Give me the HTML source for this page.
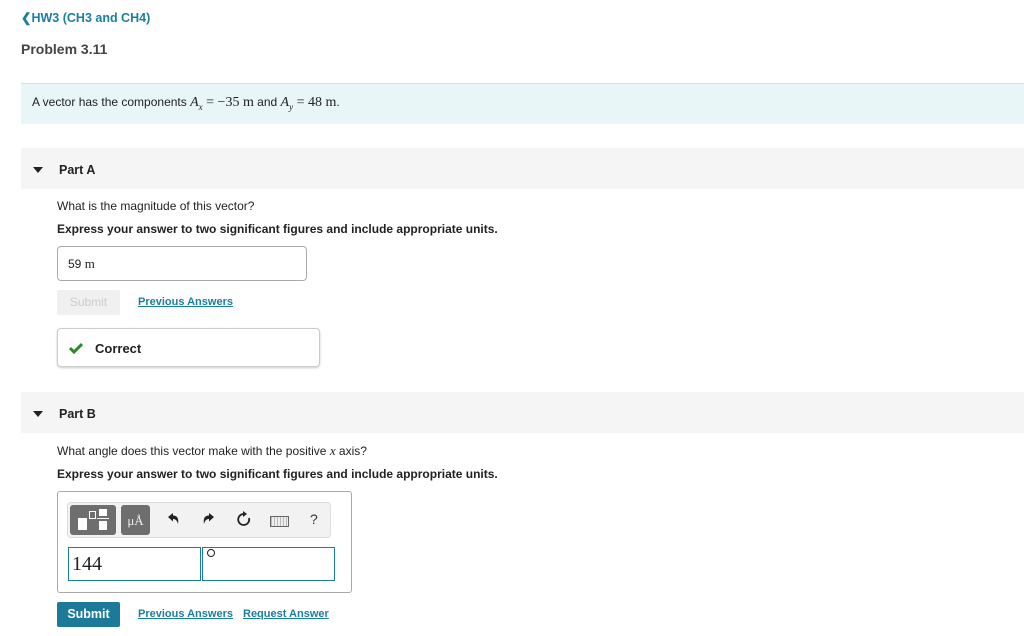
<!DOCTYPE html>
<html><head><meta charset="utf-8"><style>
body{margin:0;width:1024px;height:636px;background:#fff;font-family:"Liberation Sans",Arial,sans-serif;color:#222;position:relative;overflow:hidden}
.a{position:absolute;white-space:nowrap}
.m{font-family:"Liberation Serif",serif;font-size:14px}
.lnk{color:#1a7ea0;font-weight:bold;text-decoration:underline;font-size:11px}
.tri{width:0;height:0;border-left:5px solid transparent;border-right:5px solid transparent;border-top:6px solid #222}
</style></head><body>
<div class="a" style="left:21px;top:10px;font-size:12.5px;font-weight:bold;color:#1a7ea0">&#10094;HW3 (CH3 and CH4)</div>
<div class="a" style="left:21px;top:41px;font-size:14px;font-weight:bold;color:#444">Problem 3.11</div>
<div class="a" style="left:21px;top:83px;width:1003px;height:40px;background:#e8f6f8;border-top:1px solid #ddd"></div>
<div class="a" style="left:32px;top:95px;font-size:12px">A vector has the components <span class="m"><i>A<sub style="font-size:9px">x</sub></i> = −35 m</span> and <span class="m"><i>A<sub style="font-size:9px">y</sub></i> = 48 m</span>.</div>

<div class="a" style="left:21px;top:148px;width:1003px;height:41px;background:#f5f5f5"></div>
<div class="a tri" style="left:33px;top:167px"></div>
<div class="a" style="left:59px;top:163px;font-size:12.5px;font-weight:bold">Part A</div>
<div class="a" style="left:57px;top:199px;font-size:12px">What is the magnitude of this vector?</div>
<div class="a" style="left:57px;top:222px;font-size:12px;font-weight:bold">Express your answer to two significant figures and include appropriate units.</div>
<div class="a" style="left:57px;top:246px;width:248px;height:33px;border:1px solid #aaa;border-radius:4px"></div>
<div class="a" style="left:68px;top:256px;font-size:12px">59 <span class="m" style="font-size:13px">m</span></div>
<div class="a" style="left:57px;top:290px;width:63px;height:25px;background:#f0f0f0;border-radius:2px;color:#ccc;font-size:12px;text-align:center;line-height:25px">Submit</div>
<div class="a lnk" style="left:138px;top:296px">Previous Answers</div>
<div class="a" style="left:57px;top:328px;width:261px;height:37px;border:1px solid #ccc;border-radius:4px;box-shadow:0 1px 2px #ccc"></div>
<svg class="a" style="left:69px;top:342px" width="14" height="12"><path d="M1 6 L5 10 L13 2" stroke="#2a8a2a" stroke-width="3" fill="none"/></svg>
<div class="a" style="left:95px;top:341px;font-size:13px;font-weight:bold">Correct</div>

<div class="a" style="left:21px;top:392px;width:1003px;height:41px;background:#f5f5f5"></div>
<div class="a tri" style="left:33px;top:411px"></div>
<div class="a" style="left:59px;top:407px;font-size:12.5px;font-weight:bold">Part B</div>
<div class="a" style="left:57px;top:443px;font-size:12px">What angle does this vector make with the positive <i class="m" style="font-size:13px">x</i> axis?</div>
<div class="a" style="left:57px;top:467px;font-size:12px;font-weight:bold">Express your answer to two significant figures and include appropriate units.</div>
<div class="a" style="left:57px;top:491px;width:293px;height:100px;border:1px solid #aaa;border-radius:3px"></div>
<div class="a" style="left:67px;top:502px;width:262px;height:34px;background:#f2f2f2;border:1px solid #ddd;border-radius:4px"></div>
<div class="a" style="left:70px;top:505px;width:46px;height:30px;background:#6e6e6e;border-radius:3px"></div>
<div class="a" style="left:78px;top:518px;width:9px;height:12px;background:#fff"></div>
<div class="a" style="left:89px;top:511px;width:5px;height:6px;border:1px solid #fff"></div>
<div class="a" style="left:99px;top:509px;width:8px;height:7px;background:#fff"></div>
<div class="a" style="left:97px;top:518px;width:12px;height:1px;background:#fff"></div>
<div class="a" style="left:99px;top:521px;width:8px;height:9px;background:#fff"></div>
<div class="a" style="left:121px;top:505px;width:29px;height:30px;background:#6e6e6e;border-radius:3px;color:#eee;font-family:'Liberation Serif',serif;font-size:13px;text-align:center;line-height:32px">μÅ</div>
<svg class="a" style="left:166px;top:512px" width="14" height="14"><path d="M2 5 L7 1 L7 3.5 C11 3.5 13 6 12 12 C11 8 9 7 7 7 L7 9.5 Z" fill="#222"/></svg>
<svg class="a" style="left:202px;top:512px" width="14" height="14"><path d="M12 5 L7 1 L7 3.5 C3 3.5 1 6 2 12 C3 8 5 7 7 7 L7 9.5 Z" fill="#222"/></svg>
<svg class="a" style="left:236px;top:511px" width="16" height="16"><path d="M8 3 A5.5 5.5 0 1 0 13 7" stroke="#222" stroke-width="1.8" fill="none"/><path d="M7 0 L11 3 L7 6 Z" fill="#222"/></svg>
<div class="a" style="left:270px;top:516px;width:17px;height:9px;border:1px solid #666;background:repeating-linear-gradient(90deg,#bbb 0 1px,#eee 1px 3px)"></div>
<div class="a" style="left:310px;top:511px;font-size:14px;color:#333">?</div>
<div class="a" style="left:68px;top:547px;width:131px;height:32px;border:1px solid #1a7ea0"></div>
<div class="a" style="left:202px;top:547px;width:131px;height:32px;border:1px solid #1a7ea0"></div>
<div class="a" style="left:72px;top:553px;font-family:'Liberation Serif',serif;font-size:20px">144</div>
<div class="a" style="left:207px;top:549px;width:6px;height:6px;border:1.5px solid #222;border-radius:50%"></div>
<div class="a" style="left:57px;top:602px;width:63px;height:25px;background:#1b7a99;border-radius:2px;color:#fff;font-weight:bold;font-size:12.5px;text-align:center;line-height:25px">Submit</div>
<div class="a lnk" style="left:138px;top:608px">Previous Answers</div>
<div class="a lnk" style="left:243px;top:608px">Request Answer</div>
</body></html>
